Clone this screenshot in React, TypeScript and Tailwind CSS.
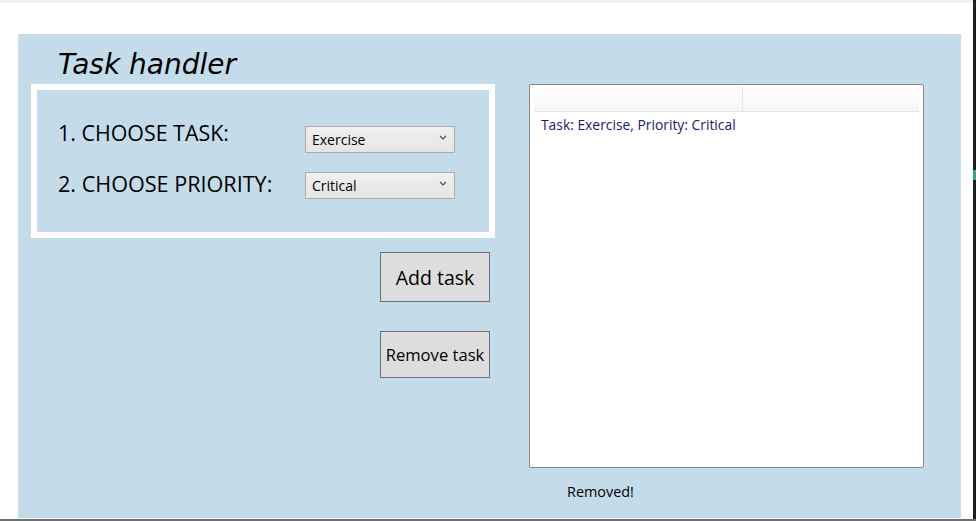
function Chevron() {
  return (
    <svg width="8" height="6" viewBox="0 0 8 6" fill="none" className="mt-[-4px]">
      <path d="M1 1 L4 4 L7 1" stroke="#4d4d4d" strokeWidth="1.2" />
    </svg>
  )
}

function Dropdown({ value, className }: { value: string; className: string }) {
  return (
    <div className={`flex h-[27px] w-[150px] items-center justify-between border border-[#acacac] bg-gradient-to-b from-[#f0f0f0] to-[#e5e5e5] pl-[6px] pr-[7px] text-[14px] text-black ${className}`}>
      <span>{value}</span>
      <Chevron />
    </div>
  )
}

function ActionButton({ label, className }: { label: string; className: string }) {
  return (
    <button className={`ml-[349px] flex w-[110px] items-center justify-center border border-[#707070] bg-[#dddddd] text-black ${className}`}>
      {label}
    </button>
  )
}

export default function App() {
  return (
    <div className="flex h-[521px] w-[976px] flex-col overflow-hidden bg-white font-['Open_Sans','Noto_Sans',sans-serif]">
      <div className="flex flex-1">
        <div className="flex flex-1 flex-col">
          <div className="h-[3px] bg-[#f0f4f1]" />
          <div className="ml-[18px] mt-[31px] flex h-[484px] w-[943px] bg-[#c4dcea]">
            <div className="ml-[13px] w-[464px]">
              <h1 className="ml-[27px] mt-[12px] h-[38px] text-[28px] leading-[38px] italic text-black font-['DejaVu_Sans',cursive]">
                Task handler
              </h1>
              <div className="h-[154px] border-[6px] border-white pl-[21px]">
                <div className="mt-[29px] flex">
                  <div className="w-[247px] text-[21.4px] leading-[27px] text-black">1. CHOOSE TASK:</div>
                  <Dropdown value="Exercise" className="mt-[7px]" />
                </div>
                <div className="mt-[16px] flex">
                  <div className="w-[247px] text-[21.6px] leading-[30px] text-black">2. CHOOSE PRIORITY:</div>
                  <Dropdown value="Critical" className="mt-[3px]" />
                </div>
              </div>
              <ActionButton label="Add task" className="mt-[14px] h-[50px] pt-[2px] text-[19.5px]" />
              <ActionButton label="Remove task" className="mt-[29px] h-[47px] pt-[2px] text-[16.6px]" />
            </div>
            <div className="ml-[34px] mt-[50px] w-[395px]">
              <div className="h-[384px] rounded-[2px] border border-[#828790] bg-white px-[4px] pt-[2px]">
                <div className="flex h-[25px] border-b border-[#e2e3e4] bg-gradient-to-b from-white to-[#f6f6f6]">
                  <div className="w-[209px] border-r border-[#e2e3e4]" />
                </div>
                <div className="pl-[7px] pt-[3px] text-[13.85px] leading-[20px] text-[#1a1a6e]">
                  Task: Exercise, Priority: Critical
                </div>
              </div>
              <div className="ml-[38px] mt-[14px] text-[14.4px] leading-[20px] text-black">Removed!</div>
            </div>
          </div>
        </div>
        <div className="flex w-[3px] flex-col bg-[#1f1f1f]">
          <div className="mt-[170px] h-[10px] bg-[#3fa77f]" />
        </div>
      </div>
      <div className="h-[2px] bg-[#6e6e6e]" />
    </div>
  )
}
